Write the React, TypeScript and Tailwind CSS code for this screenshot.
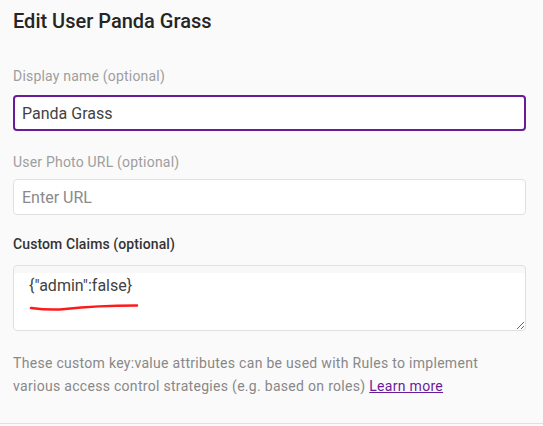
import { useState } from 'react';

const EditUserPage = () => {
  const [displayName, setDisplayName] = useState('Panda Grass');
  const [photoUrl, setPhotoUrl] = useState('');
  const [claims, setClaims] = useState('{"admin":false}');

  return (
    <div className="min-h-[426px] w-[543px] bg-[#fafafa] font-['Roboto',sans-serif]">
      <div className="pl-[13px] pr-[17px] pt-[8px]">
        <h1 className="text-[20px] leading-[26px] font-medium text-[#252525]">Edit User Panda Grass</h1>

        <label className="mt-[32px] block text-[14px] leading-[20px] tracking-[0.2px] text-[#9e9e9e]">Display name (optional)</label>
        <input
          value={displayName}
          onChange={(e) => setDisplayName(e.target.value)}
          className="mt-[9px] block h-[36px] w-full rounded-[4px] border-2 border-[#6a1b9a] bg-white px-[7px] text-[16px] text-[#424242] outline-none"
        />

        <label className="mt-[21px] block text-[14px] leading-[20px] tracking-[0.2px] text-[#9e9e9e]">User Photo URL (optional)</label>
        <input
          value={photoUrl}
          onChange={(e) => setPhotoUrl(e.target.value)}
          placeholder="Enter URL"
          className="mt-[7px] block h-[36px] w-full rounded-[4px] border border-[#e0e0e0] bg-white px-[8px] text-[16px] text-[#424242] outline-none placeholder:text-[#8a8a8a]"
        />

        <label className="mt-[19px] block text-[14px] leading-[20px] tracking-[0.1px] font-medium text-[#333333]">Custom Claims (optional)</label>
        <div className="relative mt-[11px]">
          <textarea
            value={claims}
            onChange={(e) => setClaims(e.target.value)}
            className="block h-[66px] w-full rounded-[4px] border border-[#e0e0e0] bg-white px-[15px] pt-[10px] text-[16px] leading-[20px] text-[#424242] shadow-[inset_0_7px_0_#f8f8f8] outline-none"
          />
          {/* red hand-drawn underline */}
          <svg className="pointer-events-none absolute left-0 top-0" width="160" height="60" viewBox="0 0 160 60">
            <path
              d="M18 43 C 30 44.5, 42 45, 52 44 C 70 42, 95 40.5, 124 40.5"
              fill="none"
              stroke="#ff1a1a"
              strokeWidth="2.6"
              strokeLinecap="round"
            />
          </svg>
        </div>

        <p className="mt-[21px] max-w-[470px] text-[14px] leading-[23px] tracking-[0.3px] text-[#888888]">
          These custom key:value attributes can be used with Rules to implement various access control strategies (e.g. based on roles){' '}
          <a href="#" className="text-[#6a1b9a] underline">Learn more</a>
        </p>
      </div>
      <div className="mt-[25px] h-px w-full bg-[#e0e0e0]" />
    </div>
  );
};

export default EditUserPage;
